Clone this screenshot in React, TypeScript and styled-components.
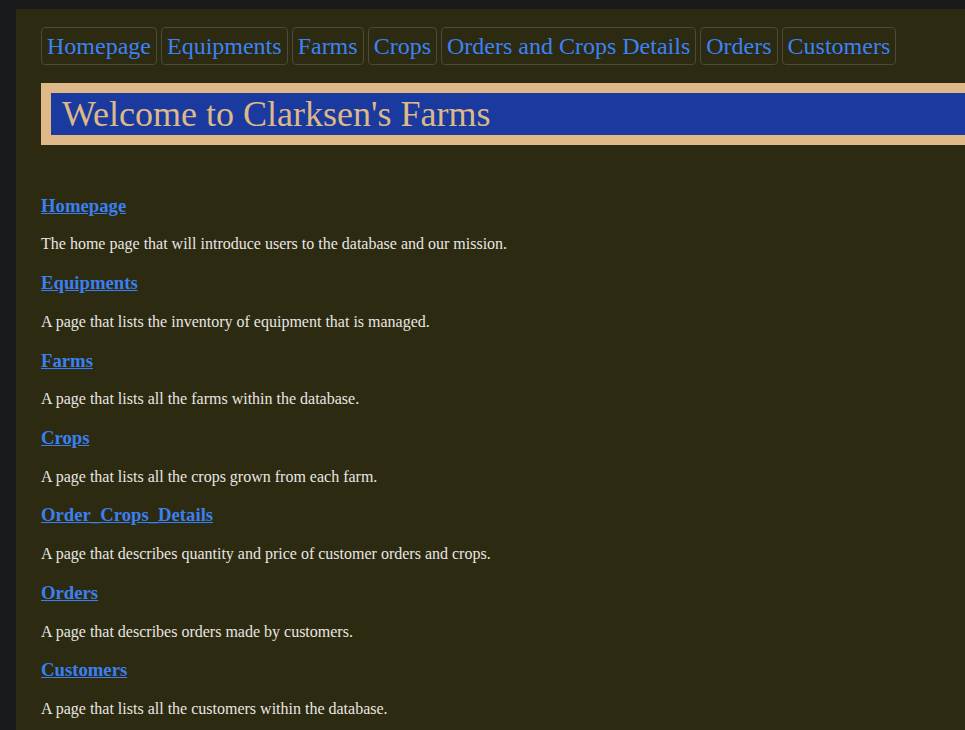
import React from 'react';
import styled, { createGlobalStyle } from 'styled-components';

interface IPageLink {
  title: string;
  label: string;
  description: string;
}

const pages: IPageLink[] = [
  {
    title: 'Homepage',
    label: 'Homepage',
    description:
      'The home page that will introduce users to the database and our mission.',
  },
  {
    title: 'Equipments',
    label: 'Equipments',
    description:
      'A page that lists the inventory of equipment that is managed.',
  },
  {
    title: 'Farms',
    label: 'Farms',
    description: 'A page that lists all the farms within the database.',
  },
  {
    title: 'Crops',
    label: 'Crops',
    description: 'A page that lists all the crops grown from each farm.',
  },
  {
    title: 'Orders and Crops Details',
    label: 'Order_Crops_Details',
    description:
      'A page that describes quantity and price of customer orders and crops.',
  },
  {
    title: 'Orders',
    label: 'Orders',
    description: 'A page that describes orders made by customers.',
  },
  {
    title: 'Customers',
    label: 'Customers',
    description: 'A page that lists all the customers within the database.',
  },
];

const GlobalStyle = createGlobalStyle`
  html, body {
    margin: 0;
    padding: 0;
    background: #18191b;
    overflow: hidden;
  }

  body {
    padding: 9px 0 0 16px;
    font-family: 'Liberation Serif', 'Times New Roman', serif;
    color: #e8e6e3;
  }
`;

const App = (): JSX.Element => {
  return (
    <>
      <GlobalStyle />
      <StyledPanel>
        <StyledNav>
          {pages.map((page) => (
            <StyledNavButton key={page.title} href="#">
              {page.title}
            </StyledNavButton>
          ))}
        </StyledNav>

        <StyledBanner>
          <StyledTitle>Welcome to Clarksen&apos;s Farms</StyledTitle>
        </StyledBanner>

        <StyledList>
          {pages.map((page) => (
            <section key={page.label}>
              <StyledHeading>
                <a href="#">{page.label}</a>
              </StyledHeading>
              <StyledText>{page.description}</StyledText>
            </section>
          ))}
        </StyledList>
      </StyledPanel>
    </>
  );
};

export default App;

export const StyledPanel = styled.div`
  min-height: 721px;
  background: #2c2a10;
  padding: 18px 0 0 25px;
  box-sizing: border-box;
`;

export const StyledNav = styled.nav`
  display: flex;
  flex-wrap: wrap;
  gap: 4px;
`;

export const StyledNavButton = styled.a`
  display: block;
  height: 38px;
  box-sizing: border-box;
  padding: 0 5px;
  border: 1px solid #4b4a3d;
  border-radius: 4px;
  font-size: 24px;
  line-height: 36px;
  color: #3c82f6;
  text-decoration: none;
`;

export const StyledBanner = styled.header`
  margin: 18px -40px 0 0;
  border: 10px solid #deb887;
  background: #1a3a9f;
`;

export const StyledTitle = styled.h1`
  margin: 0;
  padding: 0 11px;
  font-size: 36px;
  font-weight: 400;
  line-height: 42px;
  color: #deb887;
`;

export const StyledList = styled.div`
  padding-top: 31px;
`;

export const StyledHeading = styled.h3`
  margin: 18.72px 0;
  font-size: 18.72px;
  font-weight: 700;

  a {
    color: #3a80f2;
    text-decoration: underline;
  }
`;

export const StyledText = styled.p`
  margin: 16px 0;
  font-size: 16px;
`;
